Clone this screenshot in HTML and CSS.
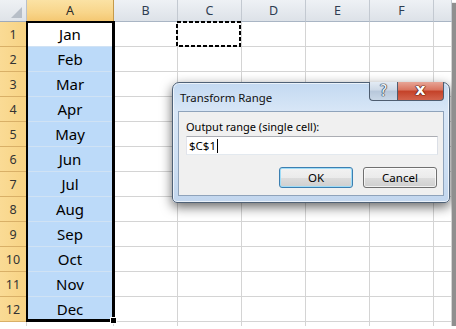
FILE: index.html
```html
<!DOCTYPE html>
<html>
<head>
<meta charset="utf-8">
<link rel="stylesheet" href="styles.css">
</head>
<body>
<div class="frame">
  <div class="sheet">
    <div class="corner"><span class="tri"></span></div>
    <div class="ch sel">A</div><div class="ch">B</div><div class="ch">C</div><div class="ch">D</div><div class="ch">E</div><div class="ch">F</div><div class="ch"></div>

    <div class="rh">1</div><div class="c a first">Jan</div><div class="c"></div><div class="c"></div><div class="c"></div><div class="c"></div><div class="c"></div><div class="c"></div>
    <div class="rh">2</div><div class="c a">Feb</div><div class="c"></div><div class="c"></div><div class="c"></div><div class="c"></div><div class="c"></div><div class="c"></div>
    <div class="rh">3</div><div class="c a">Mar</div><div class="c"></div><div class="c"></div><div class="c"></div><div class="c"></div><div class="c"></div><div class="c"></div>
    <div class="rh">4</div><div class="c a">Apr</div><div class="c"></div><div class="c"></div><div class="c"></div><div class="c"></div><div class="c"></div><div class="c"></div>
    <div class="rh">5</div><div class="c a">May</div><div class="c"></div><div class="c"></div><div class="c"></div><div class="c"></div><div class="c"></div><div class="c"></div>
    <div class="rh">6</div><div class="c a">Jun</div><div class="c"></div><div class="c"></div><div class="c"></div><div class="c"></div><div class="c"></div><div class="c"></div>
    <div class="rh">7</div><div class="c a">Jul</div><div class="c"></div><div class="c"></div><div class="c"></div><div class="c"></div><div class="c"></div><div class="c"></div>
    <div class="rh">8</div><div class="c a">Aug</div><div class="c"></div><div class="c"></div><div class="c"></div><div class="c"></div><div class="c"></div><div class="c"></div>
    <div class="rh">9</div><div class="c a">Sep</div><div class="c"></div><div class="c"></div><div class="c"></div><div class="c"></div><div class="c"></div><div class="c"></div>
    <div class="rh">10</div><div class="c a">Oct</div><div class="c"></div><div class="c"></div><div class="c"></div><div class="c"></div><div class="c"></div><div class="c"></div>
    <div class="rh">11</div><div class="c a">Nov</div><div class="c"></div><div class="c"></div><div class="c"></div><div class="c"></div><div class="c"></div><div class="c"></div>
    <div class="rh">12</div><div class="c a">Dec</div><div class="c"></div><div class="c"></div><div class="c"></div><div class="c"></div><div class="c"></div><div class="c"></div>
    <div class="rh plain"></div><div class="c"></div><div class="c"></div><div class="c"></div><div class="c"></div><div class="c"></div><div class="c"></div><div class="c"></div>
  </div>

  <div class="range"><span class="handle"></span></div>

  <svg class="ants" width="66" height="27" viewBox="0 0 66 27">
    <rect x="1" y="1" width="63" height="24" fill="none" stroke="#000" stroke-width="2" stroke-dasharray="4 2"/>
  </svg>

  <div class="dialog">
    <div class="titlebar">
      <div class="title">Transform Range</div>
      <div class="tbtns">
        <div class="tb help">?</div>
        <div class="tb close">x</div>
      </div>
    </div>
    <div class="client">
      <div class="label">Output range (single cell):</div>
      <div class="input">$C$1<span class="caret"></span></div>
      <div class="buttons">
        <div class="btn default">OK</div>
        <div class="btn">Cancel</div>
      </div>
    </div>
  </div>
</div>
</body>
</html>
```

FILE: styles.css
```css
html, body {
  margin: 0;
  padding: 0;
  background: #fff;
}

.frame {
  position: relative;
  width: 452px;
  height: 326px;
  overflow: hidden;
  background: #fff;
  box-shadow: 4px 3px 1px #8f8f8f;
}

.sheet {
  display: grid;
  grid-template-columns: 27px 87px repeat(5, 64px) 18px;
  grid-template-rows: 22px repeat(13, 25px);
  font-family: "Noto Sans", "DejaVu Sans", sans-serif;
}

.corner {
  position: relative;
  background: linear-gradient(#eef1f4, #dfe3e8);
  border-right: 1px solid #b9c0c9;
  border-bottom: 1px solid #9eaabb;
}
.corner .tri {
  position: absolute;
  right: 4px;
  bottom: 3px;
  width: 0;
  height: 0;
  border-left: 11px solid transparent;
  border-bottom: 11px solid #b7bec7;
}

.ch {
  background: linear-gradient(#eef1f5, #dde2e8);
  border-right: 1px solid #c3c9d1;
  border-bottom: 1px solid #a9b5c4;
  display: flex;
  align-items: center;
  justify-content: center;
  font-size: 12.5px;
  color: #2e3d52;
}
.ch.sel {
  background: linear-gradient(#fbe2a4, #f8d58a 60%, #f4c872);
  border-right-color: #c59a4a;
  border-bottom: 1px solid #e8a642;
  color: #2a2a2a;
}

.rh {
  background: linear-gradient(90deg, #fadb95, #f7d384);
  border-right: 1px solid #c79e52;
  border-bottom: 1px solid #d9b067;
  display: flex;
  align-items: center;
  justify-content: center;
  font-size: 12.5px;
  color: #333;
}
.rh.plain {
  background: #fff;
  border-right-color: #d4d4d4;
  border-bottom-color: #d4d4d4;
}

.c {
  border-right: 1px solid #d4d4d4;
  border-bottom: 1px solid #d4d4d4;
}
.c.a {
  background: #bcdaf9;
  border-bottom-color: #d0e2f4;
  display: flex;
  align-items: center;
  justify-content: center;
  font-size: 15px;
  color: #000;
}
.c.a.first {
  background: #fff;
}

.range {
  position: absolute;
  left: 26px;
  top: 21px;
  width: 89px;
  height: 301px;
  box-sizing: border-box;
  border-style: solid;
  border-color: #000;
  border-width: 2px 3px 3px 2px;
}
.range .handle {
  position: absolute;
  right: -5px;
  bottom: -5px;
  width: 5px;
  height: 5px;
  background: #000;
  border: 1px solid #fff;
}

.ants {
  position: absolute;
  left: 176px;
  top: 21px;
}

.dialog {
  position: absolute;
  left: 172px;
  top: 82px;
  width: 278px;
  height: 121px;
  box-sizing: border-box;
  border: 1px solid #4f6176;
  border-radius: 7px 7px 5px 5px;
  background: linear-gradient(#c3d9f1, #d9e7f7 25%, #cddff3 70%, #c2d6ee);
  box-shadow: 0 4px 12px rgba(0, 0, 0, 0.6), inset 0 0 0 1px rgba(255, 255, 255, 0.65);
  display: flex;
  flex-direction: column;
  padding: 0 5px 6px 5px;
  font-family: "Noto Sans", "DejaVu Sans", sans-serif;
  font-size: 11px;
  color: #000;
}

.titlebar {
  display: flex;
  height: 28px;
  flex: none;
}
.title {
  flex: 1;
  padding: 7px 0 0 2px;
  font-size: 11.4px;
  color: #111;
}
.tbtns {
  display: flex;
  margin-top: -1px;
}
.tb {
  height: 19px;
  box-sizing: border-box;
  display: flex;
  align-items: center;
  justify-content: center;
  font-family: "DejaVu Sans", sans-serif;
  font-weight: bold;
  color: #fff;
  border: 1px solid #4e5d70;
  border-top: none;
}
.tb.help {
  width: 28px;
  border-radius: 0 0 0 4px;
  border-right: none;
  background: linear-gradient(#e3ebf4, #cdd9e7 45%, #b7c7da 50%, #c9d7e7);
  font-size: 15px;
  font-weight: normal;
  color: #f4f7fa;
  text-shadow: 0 0 1px #2c3a4c, 0 0 1px #2c3a4c, 0 0 1px #2c3a4c, 0 0 1px #2c3a4c;
}
.tb.close {
  width: 47px;
  border-radius: 0 0 4px 0;
  background: linear-gradient(#e7a596, #d9745f 45%, #c44128 50%, #d3644d);
  font-size: 16px;
  line-height: 16px;
  padding-bottom: 3px;
  text-shadow: 0 0 1px #4a1208, 0 0 1px #4a1208, 0 0 1px #4a1208, 0 0 1px #4a1208;
}

.client {
  flex: 1;
  background: #f0f0f0;
  border: 1px solid #8fa3bb;
  padding: 7px 6px 0 7px;
  display: flex;
  flex-direction: column;
}
.label {
  line-height: 15px;
  height: 15px;
}
.input {
  margin-top: 2px;
  width: 252px;
  height: 19px;
  box-sizing: border-box;
  background: #fff;
  border: 1px solid #abadb3;
  border-left-color: #e2e3ea;
  border-right-color: #dbdfe6;
  border-bottom-color: #e3e9ef;
  padding: 0 2px;
  display: flex;
  align-items: center;
  line-height: 15px;
  font-size: 11.5px;
}
.caret {
  display: inline-block;
  width: 1px;
  height: 14px;
  background: #000;
  margin-left: 1px;
}
.buttons {
  margin-top: 12px;
  display: flex;
  justify-content: flex-end;
  gap: 10px;
}
.btn {
  width: 74px;
  height: 21px;
  box-sizing: border-box;
  border: 1px solid #707070;
  border-radius: 3px;
  background: linear-gradient(#f2f2f2, #ebebeb 50%, #dddddd 51%, #cfcfcf);
  box-shadow: inset 0 0 0 1px rgba(255, 255, 255, 0.7);
  display: flex;
  align-items: center;
  justify-content: center;
  font-size: 11.5px;
}
.btn.default {
  border-color: #3c7fb1;
  box-shadow: inset 0 0 0 1px #9fdcf7;
  background: linear-gradient(#f2f2f2, #ebebeb 50%, #dddddd 51%, #cfcfcf);
}
```
